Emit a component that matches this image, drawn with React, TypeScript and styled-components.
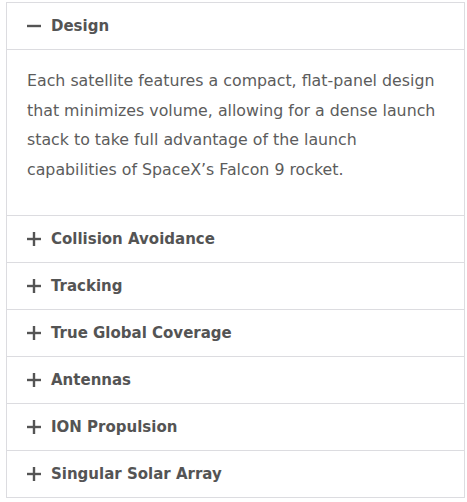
import React, { useState } from "react";
import styled, { createGlobalStyle } from "styled-components";

const GlobalStyle = createGlobalStyle`
  html, body {
    margin: 0;
    padding: 0;
    background: #ffffff;
  }
  body {
    font-family: "DejaVu Sans", "Open Sans", sans-serif;
  }
`;

const sections = [
  {
    title: "Design",
    text: "Each satellite features a compact, flat-panel design that minimizes volume, allowing for a dense launch stack to take full advantage of the launch capabilities of SpaceX\u2019s Falcon 9 rocket.",
  },
  { title: "Collision Avoidance", text: "" },
  { title: "Tracking", text: "" },
  { title: "True Global Coverage", text: "" },
  { title: "Antennas", text: "" },
  { title: "ION Propulsion", text: "" },
  { title: "Singular Solar Array", text: "" },
];

const Accordion = styled.div`
  margin: 2px 2px 0 6px;
  border: 1px solid #dcdce0;
  border-bottom: none;
  background: #fff;
`;

const Item = styled.div`
  border-bottom: 1px solid #dcdce0;
`;

const Header = styled.button`
  display: flex;
  align-items: center;
  gap: 10px;
  width: 100%;
  height: 46px;
  padding: 0 20px;
  border: none;
  background: transparent;
  cursor: pointer;
  font-family: inherit;
  font-size: 15px;
  font-weight: 700;
  color: #545454;
  text-align: left;
`;

const Icon = styled.svg`
  width: 14px;
  height: 14px;
  flex-shrink: 0;
`;

const Body = styled.div<{ $open: boolean }>`
  display: ${({ $open }) => ($open ? "block" : "none")};
  border-top: 1px solid #dcdce0;
  padding: 16px 20px 31px;
  font-size: 15.8px;
  line-height: 29.5px;
  color: #5c5c5c;
`;

const ToggleIcon: React.FC<{ open: boolean }> = ({ open }) => (
  <Icon viewBox="0 0 14 14">
    <rect x="0" y="5.8" width="14" height="2.4" fill="#545454" />
    {!open && <rect x="5.8" y="0" width="2.4" height="14" fill="#545454" />}
  </Icon>
);

const App: React.FC = () => {
  const [openIdx, setOpenIdx] = useState<number | null>(0);

  return (
    <>
      <GlobalStyle />
      <Accordion>
        {sections.map((s, idx) => (
          <Item key={s.title}>
            <Header onClick={() => setOpenIdx(openIdx === idx ? null : idx)}>
              <ToggleIcon open={openIdx === idx} />
              {s.title}
            </Header>
            <Body $open={openIdx === idx}>{s.text}</Body>
          </Item>
        ))}
      </Accordion>
    </>
  );
};

export default App;
